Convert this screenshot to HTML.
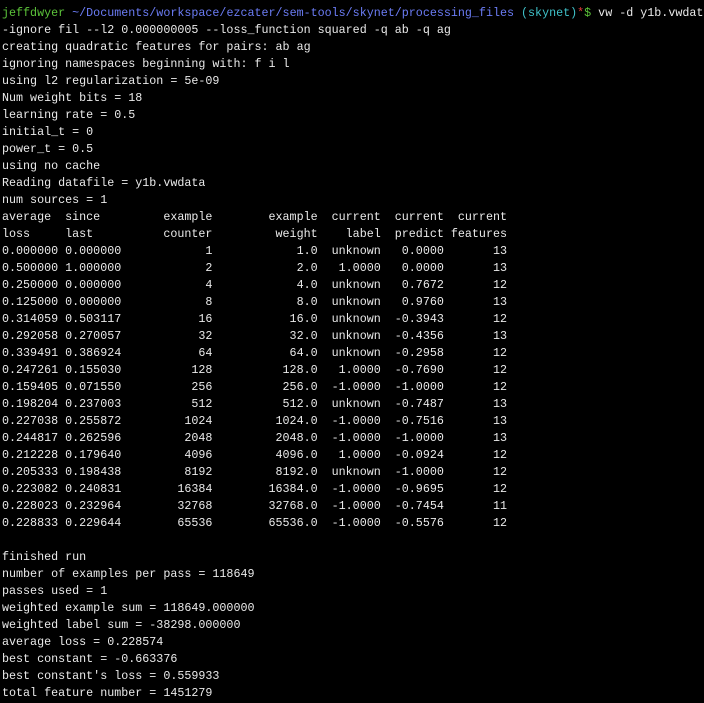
<!DOCTYPE html>
<html><head><meta charset="utf-8"><style>
html,body{margin:0;padding:0;background:#000;width:704px;height:703px;overflow:hidden}
pre{margin:0;position:absolute;left:2px;top:5px;font-family:"Liberation Mono",monospace;font-size:11.7px;line-height:17px;color:#eaeaea;white-space:pre}
.g{color:#5cc43a}.b{color:#6b7cf5}.c{color:#3fc1c9}.r{color:#e03a3a}
</style></head><body><pre><span class="g">jeffdwyer</span> <span class="b">~/Documents/workspace/ezcater/sem-tools/skynet/processing_files</span> <span class="c">(skynet)</span><span class="r">*</span><span class="g">$</span> vw -d y1b.vwdata
-ignore fil --l2 0.000000005 --loss_function squared -q ab -q ag
creating quadratic features for pairs: ab ag
ignoring namespaces beginning with: f i l
using l2 regularization = 5e-09
Num weight bits = 18
learning rate = 0.5
initial_t = 0
power_t = 0.5
using no cache
Reading datafile = y1b.vwdata
num sources = 1
average  since         example        example  current  current  current
loss     last          counter         weight    label  predict features
0.000000 0.000000            1            1.0  unknown   0.0000       13
0.500000 1.000000            2            2.0   1.0000   0.0000       13
0.250000 0.000000            4            4.0  unknown   0.7672       12
0.125000 0.000000            8            8.0  unknown   0.9760       13
0.314059 0.503117           16           16.0  unknown  -0.3943       12
0.292058 0.270057           32           32.0  unknown  -0.4356       13
0.339491 0.386924           64           64.0  unknown  -0.2958       12
0.247261 0.155030          128          128.0   1.0000  -0.7690       12
0.159405 0.071550          256          256.0  -1.0000  -1.0000       12
0.198204 0.237003          512          512.0  unknown  -0.7487       13
0.227038 0.255872         1024         1024.0  -1.0000  -0.7516       13
0.244817 0.262596         2048         2048.0  -1.0000  -1.0000       13
0.212228 0.179640         4096         4096.0   1.0000  -0.0924       12
0.205333 0.198438         8192         8192.0  unknown  -1.0000       12
0.223082 0.240831        16384        16384.0  -1.0000  -0.9695       12
0.228023 0.232964        32768        32768.0  -1.0000  -0.7454       11
0.228833 0.229644        65536        65536.0  -1.0000  -0.5576       12

finished run
number of examples per pass = 118649
passes used = 1
weighted example sum = 118649.000000
weighted label sum = -38298.000000
average loss = 0.228574
best constant = -0.663376
best constant's loss = 0.559933
total feature number = 1451279</pre></body></html>
